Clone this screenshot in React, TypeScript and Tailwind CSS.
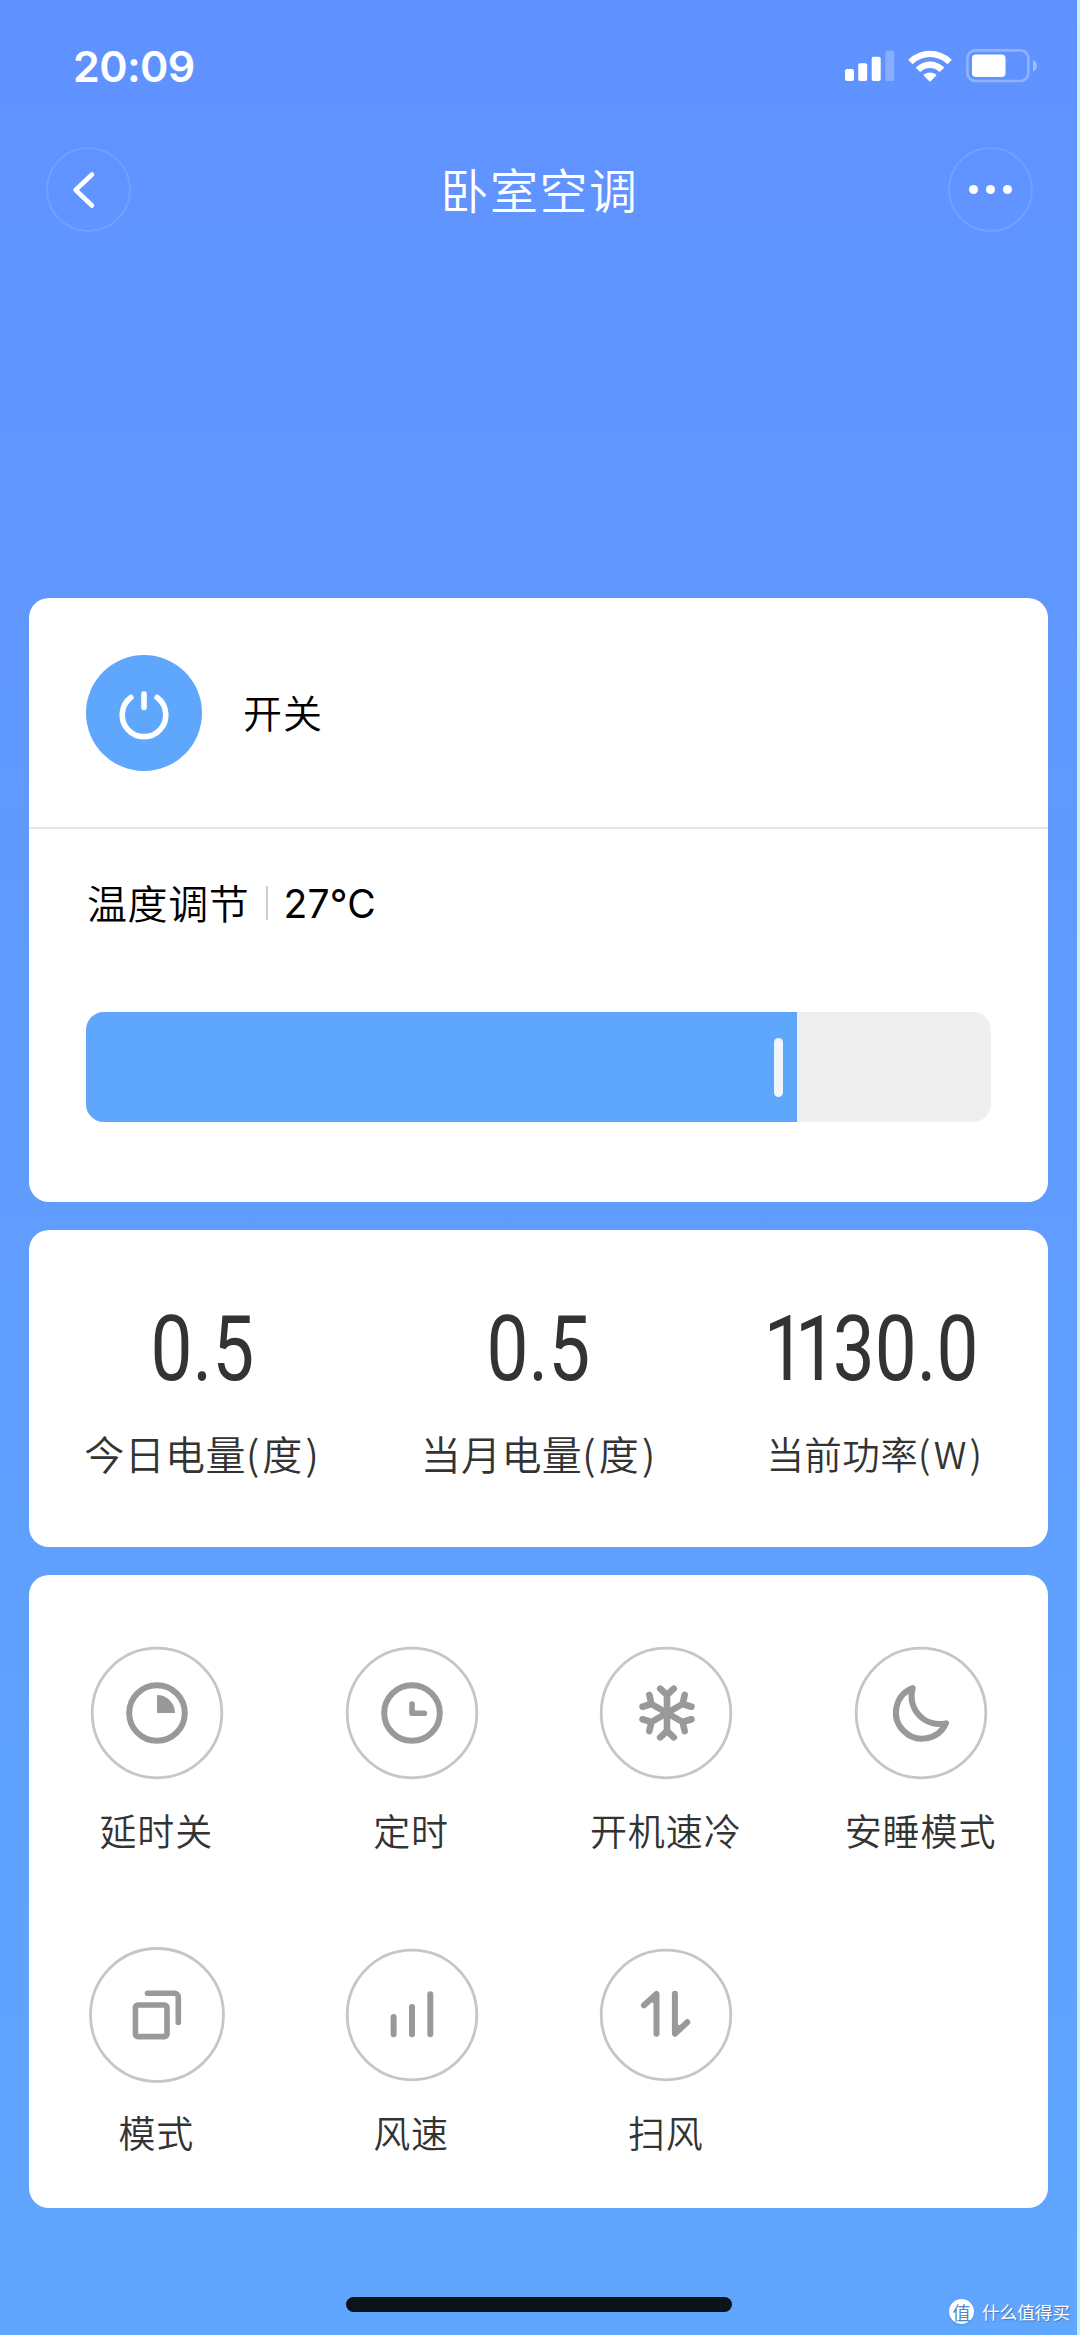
import { useState, type ReactNode } from 'react'

const stats = [
  { value: '0.5', name: '今日电量', unit: '(度)', size: 'text-[40px]' },
  { value: '0.5', name: '当月电量', unit: '(度)', size: 'text-[40px]' },
  { value: '1130.0', name: '当前功率', unit: '(W)', size: 'text-[37.5px]' },
]

const actions: { label: string; icon: ReactNode; wide?: boolean }[] = [
  {
    label: '延时关',
    icon: (
      <>
        <circle r="27.8" strokeWidth="6" />
        <path d="M0 0V-18A18 18 0 0 1 18 0Z" fill="currentColor" stroke="none" />
      </>
    ),
  },
  {
    label: '定时',
    icon: (
      <>
        <circle r="27.8" strokeWidth="6" />
        <path d="M0 -9V0.2H12.3" strokeWidth="5.6" />
      </>
    ),
  },
  {
    label: '开机速冷',
    icon: (
      <g transform="translate(1 0)" strokeWidth="6.6">
        {[0, 60, 120, 180, 240, 300].map((deg) => (
          <path key={deg} d="M0 0V-18.5M-6.8 -24.3L0 -18L6.8 -24.3" transform={`rotate(${deg})`} />
        ))}
      </g>
    ),
  },
  {
    label: '安睡模式',
    icon: <path d="M-8.3 -25A26.2 26.2 0 1 0 25 10.3A28 28 0 0 1 -8.3 -25Z" />,
  },
  {
    label: '模式',
    wide: true,
    icon: (
      <>
        <rect x="-21.6" y="-10" width="31.6" height="31.6" rx="2.5" strokeWidth="5.6" />
        <path d="M-9.5 -21.7H17.5A4 4 0 0 1 21.3 -17.7V7.5" strokeWidth="5.6" />
      </>
    ),
  },
  {
    label: '风速',
    icon: <path d="M-18.4 2V19.3M0 -8V19.3M18.3 -20.7V19.3" />,
  },
  {
    label: '扫风',
    icon: (
      <>
        <path d="M-22 -9.8L-9.5 -21V18.8M21.3 7.3L8.9 18.8V-21.3" />
        <path d="M-16 -15L-9.5 -21V-12ZM15.5 12.7L8.9 18.8V10Z" fill="currentColor" strokeWidth="3" />
      </>
    ),
  },
]

function StatusBar() {
  return (
    <div className="flex h-[132px] items-center justify-between pl-[73px] pr-[39px]">
      <span className="font-['Inter',sans-serif] text-[43px] font-semibold leading-none tracking-[-0.6px]">20:09</span>
      <div className="flex items-center">
        <svg width="50" height="32" viewBox="0 0 50 32" fill="currentColor">
          <rect x="0" y="19" width="9" height="12" rx="2" />
          <rect x="13.2" y="13.3" width="9" height="17.7" rx="2" />
          <rect x="26.7" y="6.7" width="9" height="24.3" rx="2" />
          <rect x="40.3" y="0.7" width="9" height="30.3" rx="2" opacity="0.25" />
        </svg>
        <svg className="ml-[13px]" width="44" height="32" viewBox="0 0 44 32" fill="currentColor">
          <path d="M0.8 9.2A31 31 0 0 1 43.2 9.2Q43.8 9.9 43.2 10.5L39.9 13.7Q39.3 14.2 38.6 13.6A24.5 24.5 0 0 0 5.4 13.6Q4.7 14.2 4.1 13.7L0.8 10.5Q0.2 9.9 0.8 9.2Z" />
          <path d="M8.3 17A20 20 0 0 1 35.7 17Q36.3 17.6 35.7 18.2L32.3 21.4Q31.7 22 31 21.4A13.6 13.6 0 0 0 13 21.4Q12.3 22 11.7 21.4L8.3 18.2Q7.7 17.6 8.3 17Z" />
          <path d="M15.9 24.6A9.5 9.5 0 0 1 28.1 24.6Q28.7 25.2 28.1 25.8L22.7 31.2Q22 31.8 21.3 31.2L15.9 25.8Q15.3 25.2 15.9 24.6Z" />
        </svg>
        <svg className="ml-[14px]" width="72" height="34" viewBox="0 0 72 34" fill="none">
          <rect x="1.4" y="1.4" width="61" height="30.6" rx="8" stroke="currentColor" strokeWidth="2.6" opacity="0.3" />
          <rect x="6" y="5.5" width="33.5" height="22.5" rx="4" fill="currentColor" />
          <path d="M67 11Q71 13 71 16.7T67 22.5Z" fill="currentColor" opacity="0.4" />
        </svg>
      </div>
    </div>
  )
}

function NavBar() {
  return (
    <div className="mt-[15px] flex h-[85px] items-center justify-between pl-[46px] pr-[44px]">
      <button className="flex size-[85px] items-center justify-center rounded-full border-2 border-white/12 pr-[9px]">
        <svg width="26" height="40" viewBox="0 0 26 40" fill="none" stroke="currentColor" strokeWidth="4.6" strokeLinecap="round" strokeLinejoin="round">
          <path d="M21 4.5L4.6 20L21 35.5" />
        </svg>
      </button>
      <h1 className="pb-[3px] text-[48px] font-[350] leading-none tracking-[1.6px]">卧室空调</h1>
      <button className="flex size-[85px] items-center justify-center gap-[8px] rounded-full border-2 border-white/12">
        <span className="size-[9px] rounded-full bg-white" />
        <span className="size-[9px] rounded-full bg-white" />
        <span className="size-[9px] rounded-full bg-white" />
      </button>
    </div>
  )
}

export default function App() {
  const [power, setPower] = useState(true)
  const temp = 27
  const percent = 78.6

  return (
    <main className="flex h-[2335px] w-[1080px] flex-col overflow-hidden border-r-[3px] border-[#c9ecf7] bg-linear-to-b from-[#6092ff] to-[#5fa6fe] font-['Noto_Sans_CJK_SC',sans-serif] text-white">
      <StatusBar />
      <NavBar />

      <div className="mt-[366px] flex flex-col gap-[28px] pl-[29px] pr-[29px]">
        <section className="h-[604px] rounded-[20px] bg-white text-black">
          <div className="flex h-[231px] items-center gap-[41px] border-b-2 border-[#e6e6e6] pl-[57px]">
            <button
              onClick={() => setPower(!power)}
              className="flex size-[116px] items-center justify-center rounded-full bg-[#5fa6fd] text-white"
            >
              <svg width="60" height="60" viewBox="-30 -30 60 60" fill="none" stroke="currentColor" strokeWidth="5.6" strokeLinecap="round">
                <path d="M-13.2 -15.5A21.8 21.8 0 1 0 13.2 -15.5" />
                <path d="M0 -19V-5.5" />
              </svg>
            </button>
            <span className="pb-[3px] text-[39px] font-[350] leading-none tracking-[1px]">开关</span>
          </div>

          <div className="mt-[54px] flex h-[40px] items-center pl-[58px]">
            <span className="pb-[2px] text-[40px] font-[350] leading-none tracking-[0.6px]">温度调节</span>
            <span className="ml-[17px] h-[34px] w-[2px] bg-[#cccccc]" />
            <span className="ml-[15px] font-['Inter',sans-serif] text-[39px] leading-none tracking-[0.2px]">{temp}°C</span>
          </div>

          <div className="ml-[57px] mt-[89px] h-[110px] w-[905px] overflow-hidden rounded-[18px] bg-[#efefef]">
            <div className="flex h-full items-center justify-end bg-[#5fa6fd] pr-[14px]" style={{ width: `${percent}%` }}>
              <span className="h-[59px] w-[9px] rounded-full bg-white/90" />
            </div>
          </div>
        </section>

        <section className="grid h-[317px] grid-cols-3 rounded-[20px] bg-white px-[5px] text-[#333333]">
          {stats.map((item) => (
            <div key={item.name} className="flex flex-col items-center pt-[75px]">
              <span className="h-[90px] scale-x-[0.83] font-['Roboto',sans-serif] text-[90px] leading-[90px]">
                {item.value.startsWith('11') ? (
                  <span className="mr-[9px]">
                    <span className="tracking-[-13px]">11</span>
                    <span className="ml-[8px]">{item.value.slice(2)}</span>
                  </span>
                ) : (
                  item.value
                )}
              </span>
              <span className={`mt-[37px] h-[42px] whitespace-nowrap pl-[2px] font-[350] leading-[42px] tracking-[0.4px] ${item.size}`}>
                {item.name}
                <span className="tracking-[3.2px]">{item.unit}</span>
              </span>
            </div>
          ))}
        </section>

        <section className="grid h-[633px] grid-cols-4 grid-rows-[302px_302px] rounded-[20px] bg-white text-[#333333]">
          {actions.map((item) => (
            <button key={item.label} className="flex flex-col items-center pt-[70px]">
              <span className="flex h-[136px] items-center pl-[1px]">
                <svg width="136" height="136" viewBox="-68 -68 136 136" fill="none">
                  <circle r={item.wide ? 66.5 : 64.8} stroke="#c6c6c6" strokeWidth="2.8" />
                  <g className="text-[#999999]" stroke="currentColor" strokeWidth="6" strokeLinecap="round" strokeLinejoin="round">
                    {item.icon}
                  </g>
                </svg>
              </span>
              <span className="mt-[29px] text-[37px] font-[350] leading-[40px] tracking-[1px]">{item.label}</span>
            </button>
          ))}
        </section>
      </div>

      <div className="relative mt-[89px] flex justify-center pl-[1px]">
        <div className="h-[15px] w-[386px] rounded-full bg-[#0c131b]" />
        <div className="absolute right-[7px] top-[2px] flex items-center gap-[8px]">
          <span className="flex size-[25px] items-center justify-center rounded-full bg-white text-[18px] leading-none text-[#4f86c6] shadow-sm">值</span>
          <span className="text-[17.6px] leading-none [text-shadow:1px_1px_1px_rgba(0,0,0,0.3)]">什么值得买</span>
        </div>
      </div>
    </main>
  )
}
